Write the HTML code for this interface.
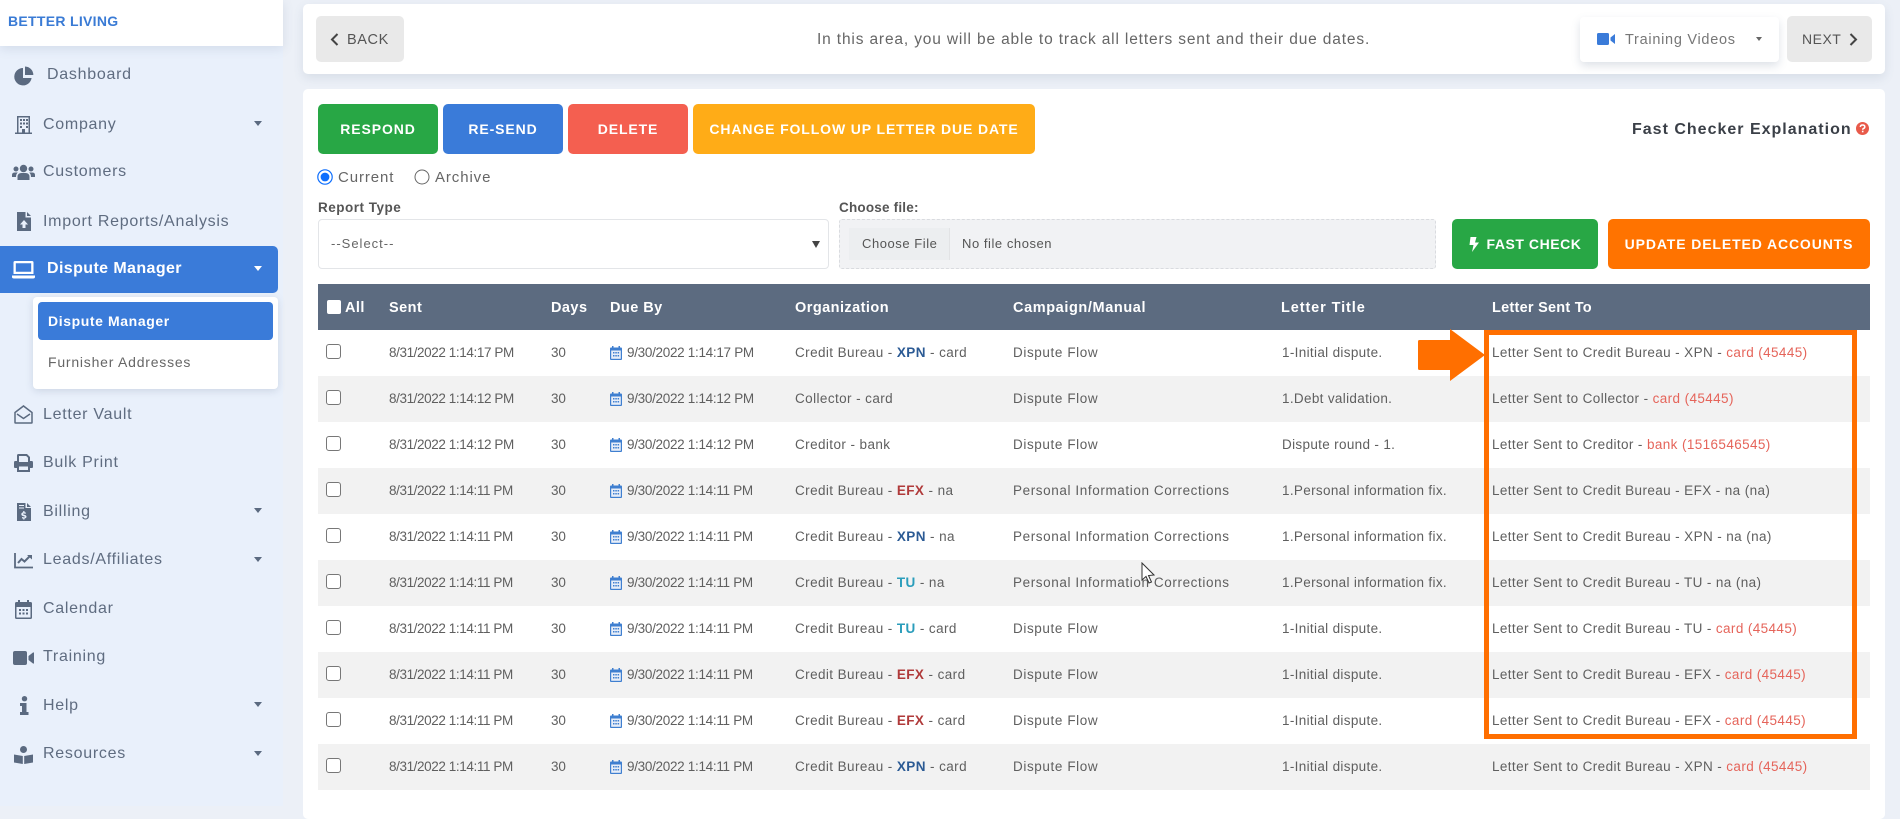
<!DOCTYPE html>
<html lang="en"><head><meta charset="utf-8"><title>Dispute Manager</title>
<style>
*{box-sizing:border-box}
html,body{margin:0;padding:0}
body{width:1900px;height:806px;overflow:hidden;position:relative;background:#ecf0f7;font-family:"Liberation Sans",sans-serif;color:#555}
.t{position:absolute;white-space:nowrap;line-height:20px;height:20px}
.a{position:absolute}
#side{position:absolute;left:0;top:0;width:283px;height:806px;background:#e9f0fb}
.logo{position:absolute;left:0;top:0;width:283px;height:46px;background:#fff;box-shadow:0 3px 10px rgba(90,110,140,.15)}
.logo span{position:absolute;left:8px;top:11px;font-size:14px;font-weight:bold;color:#3a7bd5;line-height:20px;letter-spacing:.3px}
.m{font-size:16px;color:#5f6c80;letter-spacing:.72px;left:43px}
.i{position:absolute;fill:#5b6a80}
.car{position:absolute;left:254px;width:0;height:0;border-left:4.5px solid transparent;border-right:4.5px solid transparent;border-top:5px solid #5b6a80}
.card{position:absolute;left:303px;width:1582px;background:#fff;border-radius:5px}
.btn{position:absolute;border-radius:5px;color:#fff;font-size:14px;text-align:center;font-weight:bold;letter-spacing:.88px;display:flex;align-items:center;justify-content:center}
.r{position:absolute;left:318px;width:1552px;height:46px;font-size:13.5px;color:#5f5f5f}
.r.s{background:#f2f2f2}
.r .t{top:13px}
.cb{position:absolute;left:8px;top:14px;width:15px;height:15px;border:1px solid #777;border-radius:3px;background:#fff}
.c1{left:71px;letter-spacing:-.4px}.c2{left:233px;letter-spacing:-.1px}
.c3{left:309px;letter-spacing:-.3px}.c4{left:477px;letter-spacing:.41px}
.c5{left:695px;letter-spacing:.6px}.c6{left:964px;letter-spacing:.33px}.c7{left:1174px;letter-spacing:.39px}
.cal{position:absolute;left:292px;top:16px}
.red{color:#e5645a}.x{font-weight:bold;color:#2b5a94}.e{font-weight:bold;color:#b03a3a}.u{font-weight:bold;color:#2a9dbb}
.h{color:#fff;font-weight:bold;font-size:14.5px;letter-spacing:.45px}
</style></head><body>

<div id="side">
<div class="logo"><span>BETTER LIVING</span></div>

<svg class="i" style="left:14px;top:66px" width="20" height="20" viewBox="0 0 20 20"><path d="M9 2A8.7 8.7 0 1 0 17.6 12H9Z"/><path d="M11 0.5A8.5 8.5 0 0 1 19.3 9H11Z"/></svg>
<div class="t m" style="left:47px;top:65px">Dashboard</div>

<svg class="i" style="left:15px;top:116px" width="17" height="18" viewBox="0 0 17 18"><path fill-rule="evenodd" d="M2 0H15V16.5H17V18H0V16.5H2ZM3.5 1.5V16.5H7V13H10V16.5H13.5V1.5ZM5 3H7V5H5ZM8 3H10V5H8ZM11 3H13V5H11ZM5 6.5H7V8.5H5ZM8 6.5H10V8.5H8ZM11 6.5H13V8.5H11ZM5 10H7V12H5ZM11 10H13V12H11Z"/></svg>
<div class="t m" style="top:115px">Company</div><div class="car" style="top:121px"></div>

<svg class="i" style="left:12px;top:164px" width="23" height="17" viewBox="0 0 23 17"><circle cx="11.5" cy="4.5" r="3.7"/><circle cx="4" cy="5" r="2.5"/><circle cx="19" cy="5" r="2.5"/><path d="M5.5 16V13Q5.5 9 9.5 9H13.5Q17.5 9 17.5 13V16ZM0 13V11Q0 8.5 3 8.5H5.8Q4 10 4 13ZM23 13V11Q23 8.5 20 8.5H17.2Q19 10 19 13Z"/></svg>
<div class="t m" style="top:162px">Customers</div>

<svg class="i" style="left:17px;top:212px" width="14" height="19" viewBox="0 0 14 19"><path fill-rule="evenodd" d="M0 0H8.5V5.5H14V19H0ZM10 0L14 4H10ZM7 8L3 12.5H5.5V16H8.5V12.5H11Z"/></svg>
<div class="t m" style="top:212px">Import Reports/Analysis</div>

<div class="a" style="left:0;top:246px;width:278px;height:47px;background:#3a7bd9;border-radius:0 5px 5px 0"></div>
<svg class="a" style="left:12px;top:261px" width="23" height="18" viewBox="0 0 23 18" fill="#fff"><path fill-rule="evenodd" d="M3 0H20Q21.5 0 21.5 1.5V13H1.5V1.5Q1.5 0 3 0ZM3.8 2.2V10.8H19.2V2.2Z"/><path d="M0 14.5H23V16Q23 17.5 21 17.5H2Q0 17.5 0 16Z"/></svg>
<div class="t" style="left:47px;top:259px;font-size:16px;color:#fff;font-weight:bold;letter-spacing:.4px">Dispute Manager</div>
<div class="car" style="top:266px;border-top-color:#fff"></div>

<div class="a" style="left:33px;top:297px;width:245px;height:92px;background:#fff;border-radius:4px;box-shadow:0 2px 8px rgba(90,110,140,.2)"></div>
<div class="a" style="left:38px;top:302px;width:235px;height:38px;background:#3a7bd9;border-radius:4px"></div>
<div class="t" style="left:48px;top:311px;font-size:14px;color:#fff;font-weight:bold;letter-spacing:.6px">Dispute Manager</div>
<div class="t" style="left:48px;top:352px;font-size:14px;color:#666;letter-spacing:.78px">Furnisher Addresses</div>

<svg class="a" style="left:14px;top:405px" width="19" height="19" viewBox="0 0 19 19" fill="none" stroke="#5b6a80" stroke-width="1.5"><path d="M1 7.5L9.5 1L18 7.5V17.5Q18 18 17.5 18H1.5Q1 18 1 17.5Z"/><path d="M3 9L9.5 13.5L16 9"/></svg>
<div class="t m" style="top:405px">Letter Vault</div>

<svg class="i" style="left:14px;top:454px" width="19" height="18" viewBox="0 0 19 18"><path fill-rule="evenodd" d="M3 1.5Q3 0 4.5 0H13L16 3V7H18Q19 7 19 9V13Q19 14 17.5 14H16V18H3V14H1.5Q0 14 0 13V9Q0 7 1 7H3ZM5 2V8H14V3.8L12.2 2ZM5 12.5V16H14V12.5Z"/></svg>
<div class="t m" style="top:453px">Bulk Print</div>

<svg class="i" style="left:17px;top:503px" width="14" height="18" viewBox="0 0 14 18"><path fill-rule="evenodd" d="M0 0H8.5V5H14V18H0ZM10 0L14 4H10ZM2 2V3H7V2ZM2 4.5V5.5H7V4.5ZM6.2 8V9.2Q4.3 9.6 4.3 11.2Q4.3 12.8 6.7 13.2Q8 13.5 7.9 14Q7.6 14.7 5 14V15.2Q5.5 15.5 6.2 15.5V16.5H7.5V15.5Q9.5 15.2 9.5 13.6Q9.5 12.2 7.2 11.7Q5.9 11.4 6 10.8Q6.3 10.3 8.8 10.8V9.5Q8.2 9.3 7.5 9.2V8Z"/></svg>
<div class="t m" style="top:502px">Billing</div><div class="car" style="top:508px"></div>

<svg class="a" style="left:14px;top:552px" width="19" height="17" viewBox="0 0 19 17" fill="none" stroke="#5b6a80"><path stroke-width="1.8" d="M1 1V15.5H19"/><path stroke-width="2" d="M4 11L7.5 7L10.5 9.5L16 4"/><path fill="#5b6a80" stroke="none" d="M13 3H18V7.5Z"/></svg>
<div class="t m" style="top:550px">Leads/Affiliates</div><div class="car" style="top:557px"></div>

<svg class="a" style="left:15px;top:600px" width="17" height="19" viewBox="0 0 17 19"><path fill-rule="evenodd" fill="#5b6a80" d="M3 0H5V2H12V0H14V2H15.5Q17 2 17 3.5V17.5Q17 19 15.5 19H1.5Q0 19 0 17.5V3.5Q0 2 1.5 2H3ZM1.5 7V17.5H15.5V7ZM4 9H6V11H4ZM7.5 9H9.5V11H7.5ZM11 9H13V11H11ZM4 12.5H6V14.5H4ZM7.5 12.5H9.5V14.5H7.5ZM11 12.5H13V14.5H11Z"/></svg>
<div class="t m" style="top:599px">Calendar</div>

<svg class="i" style="left:13px;top:651px" width="21" height="14" viewBox="0 0 21 14"><rect width="14" height="14" rx="2"/><path d="M15.5 5L20 1.5Q21 1 21 2V12Q21 13 20 12.5L15.5 9Z"/></svg>
<div class="t m" style="top:647px">Training</div>

<svg class="i" style="left:19px;top:696px" width="10" height="19" viewBox="0 0 10 19"><circle cx="5.5" cy="2.7" r="2.7"/><path d="M1 7H7.5V16H9.5V19H1V16H3V10H1Z"/></svg>
<div class="t m" style="top:696px">Help</div><div class="car" style="top:702px"></div>

<svg class="i" style="left:14px;top:746px" width="19" height="18" viewBox="0 0 19 18"><circle cx="9.5" cy="3.5" r="3.5"/><path d="M0 8.5L8.8 10V18L0 16.5ZM19 8.5L10.2 10V18L19 16.5Z"/></svg>
<div class="t m" style="top:744px">Resources</div><div class="car" style="top:751px"></div>
</div>

<div class="card" style="top:4px;height:70px;box-shadow:0 4px 10px rgba(90,110,140,.14)"></div>
<div class="a" style="left:316px;top:16px;width:88px;height:46px;background:#e9e9e9;border-radius:5px"></div>
<svg class="a" style="left:330px;top:33px" width="9" height="13" viewBox="0 0 9 13" fill="none" stroke="#444" stroke-width="2"><path d="M7.5 1L2 6.5L7.5 12"/></svg>
<div class="t" style="left:347px;top:30px;font-size:14.5px;color:#555;letter-spacing:.6px">BACK</div>
<div class="t" style="left:817px;top:30px;font-size:15.5px;color:#666;letter-spacing:.85px">In this area, you will be able to track all letters sent and their due dates.</div>
<div class="a" style="left:1580px;top:17px;width:199px;height:45px;background:#fff;border-radius:4px;box-shadow:0 4px 9px rgba(90,110,140,.2)"></div>
<svg class="a" style="left:1597px;top:33px" width="19" height="12" viewBox="0 0 19 12" fill="#3a7bd9"><rect width="12" height="12" rx="1.5"/><path d="M13.5 4.5L18 1V11L13.5 7.5Z"/></svg>
<div class="t" style="left:1625px;top:30px;font-size:14.5px;color:#777;letter-spacing:.72px">Training Videos</div>
<div class="a" style="left:1756px;top:37px;width:0;height:0;border-left:3.5px solid transparent;border-right:3.5px solid transparent;border-top:4px solid #666"></div>
<div class="a" style="left:1787px;top:16px;width:85px;height:46px;background:#e9e9e9;border-radius:5px"></div>
<div class="t" style="left:1802px;top:29px;font-size:14px;color:#555;letter-spacing:.5px">NEXT</div>
<svg class="a" style="left:1849px;top:33px" width="9" height="13" viewBox="0 0 9 13" fill="none" stroke="#444" stroke-width="2"><path d="M1.5 1L7 6.5L1.5 12"/></svg>

<div class="card" style="top:89px;height:730px"></div>
<div class="btn" style="left:318px;top:104px;width:120px;height:50px;background:#28a745">RESPOND</div>
<div class="btn" style="left:443px;top:104px;width:120px;height:50px;background:#3a7bd9">RE-SEND</div>
<div class="btn" style="left:568px;top:104px;width:120px;height:50px;background:#f45f50">DELETE</div>
<div class="btn" style="left:693px;top:104px;width:342px;height:50px;background:#ffac17">CHANGE FOLLOW UP LETTER DUE DATE</div>
<div class="t" style="left:1632px;top:120px;font-size:16px;font-weight:bold;color:#3a3f47;letter-spacing:1px">Fast Checker Explanation</div>
<svg class="a" style="left:1856px;top:122px" width="13" height="13" viewBox="0 0 13 13"><circle cx="6.5" cy="6.5" r="6.5" fill="#e85a4a"/><path d="M4.3 5Q4.5 3 6.5 3Q8.8 3 8.8 4.8Q8.8 6 7.5 6.5Q6.7 6.8 6.7 7.8" fill="none" stroke="#fff" stroke-width="1.5"/><rect x="5.9" y="8.7" width="1.6" height="1.6" fill="#fff"/></svg>

<svg class="a" style="left:317px;top:169px" width="16" height="16" viewBox="0 0 16 16"><circle cx="8" cy="8" r="7.2" fill="#fff" stroke="#0d6efd" stroke-width="1.2"/><circle cx="8" cy="8" r="4.4" fill="#0d6efd"/></svg>
<div class="t" style="left:338px;top:168px;font-size:15px;color:#666;letter-spacing:.9px">Current</div>
<svg class="a" style="left:414px;top:169px" width="16" height="16" viewBox="0 0 16 16"><circle cx="8" cy="8" r="7" fill="#fff" stroke="#666" stroke-width="1"/></svg>
<div class="t" style="left:435px;top:168px;font-size:15px;color:#666;letter-spacing:.9px">Archive</div>

<div class="t" style="left:318px;top:198px;font-size:13.5px;font-weight:bold;color:#555;letter-spacing:.5px">Report Type</div>
<div class="a" style="left:318px;top:219px;width:511px;height:50px;border:1px solid #e3e5e8;border-radius:4px;background:#fff"></div>
<div class="t" style="left:331px;top:234px;font-size:13px;color:#666;letter-spacing:1px">--Select--</div>
<div class="a" style="left:812px;top:241px;width:0;height:0;border-left:4px solid transparent;border-right:4px solid transparent;border-top:7px solid #444"></div>

<div class="t" style="left:839px;top:198px;font-size:13.5px;font-weight:bold;color:#555;letter-spacing:.2px">Choose file:</div>
<div class="a" style="left:839px;top:219px;width:597px;height:50px;background:#f1f2f4;border:1px dashed #d9dbdf;border-radius:3px"></div>
<div class="a" style="left:849px;top:228px;width:101px;height:32px;background:#eceef0;border-right:1px solid #e2e3e5"></div>
<div class="t" style="left:862px;top:234px;font-size:13px;color:#555;letter-spacing:.55px">Choose File</div>
<div class="t" style="left:962px;top:234px;font-size:13px;color:#555;letter-spacing:.55px">No file chosen</div>

<div class="btn" style="left:1452px;top:219px;width:146px;height:50px;background:#28a745;letter-spacing:.55px"><svg width="10" height="15" viewBox="0 0 10 15" fill="#fff" style="margin-right:8px"><path d="M1.5 0H7.5L6 5.5H10L3 15L4.5 8H0.5Z"/></svg>FAST CHECK</div>
<div class="btn" style="left:1608px;top:219px;width:262px;height:50px;background:#ff7300">UPDATE DELETED ACCOUNTS</div>

<div class="a" style="left:318px;top:284px;width:1552px;height:46px;background:#5c6b80"></div>
<div class="a" style="left:327px;top:300px;width:14px;height:14px;background:#fff;border-radius:2px"></div>
<div class="t h" style="left:345px;top:298px">All</div>
<div class="t h" style="left:389px;top:298px">Sent</div>
<div class="t h" style="left:551px;top:298px">Days</div>
<div class="t h" style="left:610px;top:298px">Due By</div>
<div class="t h" style="left:795px;top:298px">Organization</div>
<div class="t h" style="left:1013px;top:298px;letter-spacing:.6px">Campaign/Manual</div>
<div class="t h" style="left:1281px;top:298px;letter-spacing:.9px">Letter Title</div>
<div class="t h" style="left:1492px;top:298px;letter-spacing:.25px">Letter Sent To</div>

<div class="r" style="top:330px"><div class="cb"></div><div class="t c1">8/31/2022 1:14:17 PM</div><div class="t c2">30</div><svg class="cal" width="12" height="14" viewBox="0 0 12 14"><path fill="#3f7fd0" d="M2 0H3.5V1.5H8.5V0H10V1.5H11Q12 1.5 12 2.5V13Q12 14 11 14H1Q0 14 0 13V2.5Q0 1.5 1 1.5H2Z"/><rect x="1.2" y="4.5" width="9.6" height="8.3" fill="#e8eef8"/><path fill="#3f7fd0" d="M3 6H4.5V7.5H3ZM5.3 6H6.8V7.5H5.3ZM7.6 6H9.1V7.5H7.6ZM3 9H4.5V10.5H3ZM5.3 9H6.8V10.5H5.3ZM7.6 9H9.1V10.5H7.6Z"/></svg><div class="t c3">9/30/2022 1:14:17 PM</div><div class="t c4">Credit Bureau - <span class="x">XPN</span> - card</div><div class="t c5">Dispute Flow</div><div class="t c6">1-Initial dispute.</div><div class="t c7">Letter Sent to Credit Bureau - XPN - <span class="red">card (45445)</span></div></div>

<div class="r s" style="top:376px"><div class="cb"></div><div class="t c1">8/31/2022 1:14:12 PM</div><div class="t c2">30</div><svg class="cal" width="12" height="14" viewBox="0 0 12 14"><path fill="#3f7fd0" d="M2 0H3.5V1.5H8.5V0H10V1.5H11Q12 1.5 12 2.5V13Q12 14 11 14H1Q0 14 0 13V2.5Q0 1.5 1 1.5H2Z"/><rect x="1.2" y="4.5" width="9.6" height="8.3" fill="#e8eef8"/><path fill="#3f7fd0" d="M3 6H4.5V7.5H3ZM5.3 6H6.8V7.5H5.3ZM7.6 6H9.1V7.5H7.6ZM3 9H4.5V10.5H3ZM5.3 9H6.8V10.5H5.3ZM7.6 9H9.1V10.5H7.6Z"/></svg><div class="t c3">9/30/2022 1:14:12 PM</div><div class="t c4">Collector - card</div><div class="t c5">Dispute Flow</div><div class="t c6">1.Debt validation.</div><div class="t c7">Letter Sent to Collector - <span class="red">card (45445)</span></div></div>

<div class="r" style="top:422px"><div class="cb"></div><div class="t c1">8/31/2022 1:14:12 PM</div><div class="t c2">30</div><svg class="cal" width="12" height="14" viewBox="0 0 12 14"><path fill="#3f7fd0" d="M2 0H3.5V1.5H8.5V0H10V1.5H11Q12 1.5 12 2.5V13Q12 14 11 14H1Q0 14 0 13V2.5Q0 1.5 1 1.5H2Z"/><rect x="1.2" y="4.5" width="9.6" height="8.3" fill="#e8eef8"/><path fill="#3f7fd0" d="M3 6H4.5V7.5H3ZM5.3 6H6.8V7.5H5.3ZM7.6 6H9.1V7.5H7.6ZM3 9H4.5V10.5H3ZM5.3 9H6.8V10.5H5.3ZM7.6 9H9.1V10.5H7.6Z"/></svg><div class="t c3">9/30/2022 1:14:12 PM</div><div class="t c4">Creditor - bank</div><div class="t c5">Dispute Flow</div><div class="t c6">Dispute round - 1.</div><div class="t c7">Letter Sent to Creditor - <span class="red">bank (1516546545)</span></div></div>

<div class="r s" style="top:468px"><div class="cb"></div><div class="t c1">8/31/2022 1:14:11 PM</div><div class="t c2">30</div><svg class="cal" width="12" height="14" viewBox="0 0 12 14"><path fill="#3f7fd0" d="M2 0H3.5V1.5H8.5V0H10V1.5H11Q12 1.5 12 2.5V13Q12 14 11 14H1Q0 14 0 13V2.5Q0 1.5 1 1.5H2Z"/><rect x="1.2" y="4.5" width="9.6" height="8.3" fill="#e8eef8"/><path fill="#3f7fd0" d="M3 6H4.5V7.5H3ZM5.3 6H6.8V7.5H5.3ZM7.6 6H9.1V7.5H7.6ZM3 9H4.5V10.5H3ZM5.3 9H6.8V10.5H5.3ZM7.6 9H9.1V10.5H7.6Z"/></svg><div class="t c3">9/30/2022 1:14:11 PM</div><div class="t c4">Credit Bureau - <span class="e">EFX</span> - na</div><div class="t c5">Personal Information Corrections</div><div class="t c6">1.Personal information fix.</div><div class="t c7">Letter Sent to Credit Bureau - EFX - na (na)</div></div>

<div class="r" style="top:514px"><div class="cb"></div><div class="t c1">8/31/2022 1:14:11 PM</div><div class="t c2">30</div><svg class="cal" width="12" height="14" viewBox="0 0 12 14"><path fill="#3f7fd0" d="M2 0H3.5V1.5H8.5V0H10V1.5H11Q12 1.5 12 2.5V13Q12 14 11 14H1Q0 14 0 13V2.5Q0 1.5 1 1.5H2Z"/><rect x="1.2" y="4.5" width="9.6" height="8.3" fill="#e8eef8"/><path fill="#3f7fd0" d="M3 6H4.5V7.5H3ZM5.3 6H6.8V7.5H5.3ZM7.6 6H9.1V7.5H7.6ZM3 9H4.5V10.5H3ZM5.3 9H6.8V10.5H5.3ZM7.6 9H9.1V10.5H7.6Z"/></svg><div class="t c3">9/30/2022 1:14:11 PM</div><div class="t c4">Credit Bureau - <span class="x">XPN</span> - na</div><div class="t c5">Personal Information Corrections</div><div class="t c6">1.Personal information fix.</div><div class="t c7">Letter Sent to Credit Bureau - XPN - na (na)</div></div>

<div class="r s" style="top:560px"><div class="cb"></div><div class="t c1">8/31/2022 1:14:11 PM</div><div class="t c2">30</div><svg class="cal" width="12" height="14" viewBox="0 0 12 14"><path fill="#3f7fd0" d="M2 0H3.5V1.5H8.5V0H10V1.5H11Q12 1.5 12 2.5V13Q12 14 11 14H1Q0 14 0 13V2.5Q0 1.5 1 1.5H2Z"/><rect x="1.2" y="4.5" width="9.6" height="8.3" fill="#e8eef8"/><path fill="#3f7fd0" d="M3 6H4.5V7.5H3ZM5.3 6H6.8V7.5H5.3ZM7.6 6H9.1V7.5H7.6ZM3 9H4.5V10.5H3ZM5.3 9H6.8V10.5H5.3ZM7.6 9H9.1V10.5H7.6Z"/></svg><div class="t c3">9/30/2022 1:14:11 PM</div><div class="t c4">Credit Bureau - <span class="u">TU</span> - na</div><div class="t c5">Personal Information Corrections</div><div class="t c6">1.Personal information fix.</div><div class="t c7">Letter Sent to Credit Bureau - TU - na (na)</div></div>

<div class="r" style="top:606px"><div class="cb"></div><div class="t c1">8/31/2022 1:14:11 PM</div><div class="t c2">30</div><svg class="cal" width="12" height="14" viewBox="0 0 12 14"><path fill="#3f7fd0" d="M2 0H3.5V1.5H8.5V0H10V1.5H11Q12 1.5 12 2.5V13Q12 14 11 14H1Q0 14 0 13V2.5Q0 1.5 1 1.5H2Z"/><rect x="1.2" y="4.5" width="9.6" height="8.3" fill="#e8eef8"/><path fill="#3f7fd0" d="M3 6H4.5V7.5H3ZM5.3 6H6.8V7.5H5.3ZM7.6 6H9.1V7.5H7.6ZM3 9H4.5V10.5H3ZM5.3 9H6.8V10.5H5.3ZM7.6 9H9.1V10.5H7.6Z"/></svg><div class="t c3">9/30/2022 1:14:11 PM</div><div class="t c4">Credit Bureau - <span class="u">TU</span> - card</div><div class="t c5">Dispute Flow</div><div class="t c6">1-Initial dispute.</div><div class="t c7">Letter Sent to Credit Bureau - TU - <span class="red">card (45445)</span></div></div>

<div class="r s" style="top:652px"><div class="cb"></div><div class="t c1">8/31/2022 1:14:11 PM</div><div class="t c2">30</div><svg class="cal" width="12" height="14" viewBox="0 0 12 14"><path fill="#3f7fd0" d="M2 0H3.5V1.5H8.5V0H10V1.5H11Q12 1.5 12 2.5V13Q12 14 11 14H1Q0 14 0 13V2.5Q0 1.5 1 1.5H2Z"/><rect x="1.2" y="4.5" width="9.6" height="8.3" fill="#e8eef8"/><path fill="#3f7fd0" d="M3 6H4.5V7.5H3ZM5.3 6H6.8V7.5H5.3ZM7.6 6H9.1V7.5H7.6ZM3 9H4.5V10.5H3ZM5.3 9H6.8V10.5H5.3ZM7.6 9H9.1V10.5H7.6Z"/></svg><div class="t c3">9/30/2022 1:14:11 PM</div><div class="t c4">Credit Bureau - <span class="e">EFX</span> - card</div><div class="t c5">Dispute Flow</div><div class="t c6">1-Initial dispute.</div><div class="t c7">Letter Sent to Credit Bureau - EFX - <span class="red">card (45445)</span></div></div>

<div class="r" style="top:698px"><div class="cb"></div><div class="t c1">8/31/2022 1:14:11 PM</div><div class="t c2">30</div><svg class="cal" width="12" height="14" viewBox="0 0 12 14"><path fill="#3f7fd0" d="M2 0H3.5V1.5H8.5V0H10V1.5H11Q12 1.5 12 2.5V13Q12 14 11 14H1Q0 14 0 13V2.5Q0 1.5 1 1.5H2Z"/><rect x="1.2" y="4.5" width="9.6" height="8.3" fill="#e8eef8"/><path fill="#3f7fd0" d="M3 6H4.5V7.5H3ZM5.3 6H6.8V7.5H5.3ZM7.6 6H9.1V7.5H7.6ZM3 9H4.5V10.5H3ZM5.3 9H6.8V10.5H5.3ZM7.6 9H9.1V10.5H7.6Z"/></svg><div class="t c3">9/30/2022 1:14:11 PM</div><div class="t c4">Credit Bureau - <span class="e">EFX</span> - card</div><div class="t c5">Dispute Flow</div><div class="t c6">1-Initial dispute.</div><div class="t c7">Letter Sent to Credit Bureau - EFX - <span class="red">card (45445)</span></div></div>

<div class="r s" style="top:744px"><div class="cb"></div><div class="t c1">8/31/2022 1:14:11 PM</div><div class="t c2">30</div><svg class="cal" width="12" height="14" viewBox="0 0 12 14"><path fill="#3f7fd0" d="M2 0H3.5V1.5H8.5V0H10V1.5H11Q12 1.5 12 2.5V13Q12 14 11 14H1Q0 14 0 13V2.5Q0 1.5 1 1.5H2Z"/><rect x="1.2" y="4.5" width="9.6" height="8.3" fill="#e8eef8"/><path fill="#3f7fd0" d="M3 6H4.5V7.5H3ZM5.3 6H6.8V7.5H5.3ZM7.6 6H9.1V7.5H7.6ZM3 9H4.5V10.5H3ZM5.3 9H6.8V10.5H5.3ZM7.6 9H9.1V10.5H7.6Z"/></svg><div class="t c3">9/30/2022 1:14:11 PM</div><div class="t c4">Credit Bureau - <span class="x">XPN</span> - card</div><div class="t c5">Dispute Flow</div><div class="t c6">1-Initial dispute.</div><div class="t c7">Letter Sent to Credit Bureau - XPN - <span class="red">card (45445)</span></div></div>

<div class="a" style="left:1484px;top:330px;width:373px;height:409px;border:5px solid #ff6f00"></div>
<svg class="a" style="left:1418px;top:326px" width="70" height="58" viewBox="0 0 70 58"><path fill="#ff6f00" d="M1.5 14H32V3L67 29L32 55V44H1.5Q0 44 0 42.5V15.5Q0 14 1.5 14Z"/></svg>
<svg class="a" style="left:1141px;top:562px" width="14" height="22" viewBox="0 0 14 22"><path d="M1 1V18L5 14.5L8 21L10.5 20L7.5 13.5L13 13Z" fill="#fff" stroke="#333" stroke-width="1"/></svg>
</body></html>
